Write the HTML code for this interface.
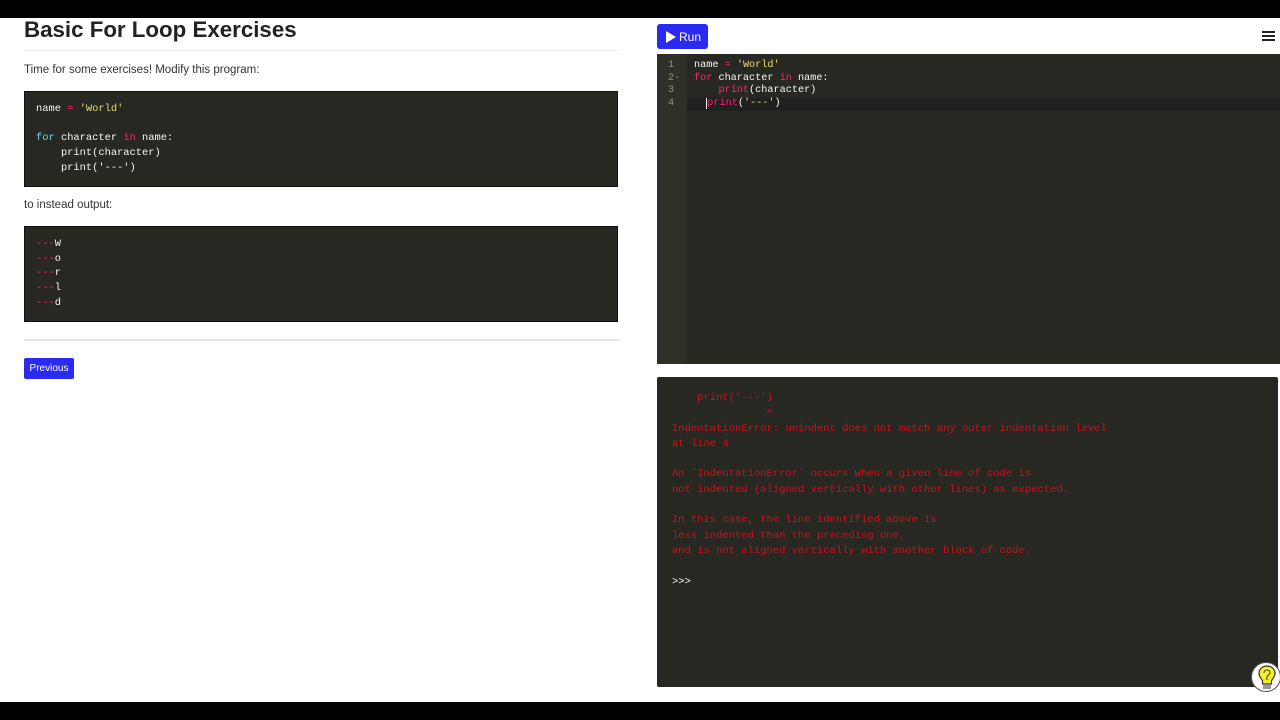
<!DOCTYPE html>
<html><head><style>
body{margin:0;width:1280px;height:720px;background:#fff;position:relative;overflow:hidden;font-family:"Liberation Sans",sans-serif}
.bar{position:absolute;left:0;width:1280px;background:#000}
.m{font-family:"Liberation Mono",monospace;white-space:pre}
.blk{position:absolute;left:24px;width:594px;background:#272822;color:#f8f8f2;font-size:10.4px;line-height:14.7px;padding:0 11px;box-sizing:border-box;border:1px solid #111}
.r{color:#f92672}.y{color:#e6db74}.c{color:#66d9ef}
.err{color:#d0101c}
</style></head><body>
<div class="bar" style="top:0;height:18px"></div>
<div class="bar" style="top:702px;height:18px"></div>

<div style="position:absolute;left:24px;top:17px;font-size:22.3px;font-weight:bold;color:#222">Basic For Loop Exercises</div>
<div style="position:absolute;left:24px;top:50px;width:596px;height:1px;background:#eee"></div>
<div style="position:absolute;left:24px;top:64px;font-size:11.5px;color:#333">Time for some exercises! Modify this program:</div>
<div class="blk m" style="top:91px;height:96px;padding-top:10px">name <span class="r">=</span> <span class="y">'World'</span>

<span class="c">for</span> character <span class="r">in</span> name:
    print(character)
    print('---')</div>
<div style="position:absolute;left:24px;top:199px;font-size:11.5px;color:#333">to instead output:</div>
<div class="blk m" style="top:226px;height:96px;padding-top:10px"><span class="r">---</span>W
<span class="r">---</span>o
<span class="r">---</span>r
<span class="r">---</span>l
<span class="r">---</span>d</div>
<div style="position:absolute;left:24px;top:339px;width:596px;height:2px;background:#e5e5e5"></div>
<div style="position:absolute;left:24px;top:358px;width:50px;height:21px;background:#2a2af0;border-radius:2px;color:#fff;font-size:10px;line-height:21px;text-align:center">Previous</div>

<div style="position:absolute;left:657px;top:24px;width:51px;height:25px;background:#2a2af0;border-radius:3px;color:#fff;font-size:12px;line-height:25px"><span style="position:absolute;left:9px;top:7px;width:0;height:0;border-left:10px solid #fff;border-top:6px solid transparent;border-bottom:6px solid transparent"></span><span style="position:absolute;left:22px;top:1px">Run</span></div>
<div style="position:absolute;left:1262px;top:31px;width:13px;height:2px;background:#222;box-shadow:0 4px 0 #222,0 8px 0 #222"></div>

<div style="position:absolute;left:657px;top:54px;width:623px;height:310px;background:#272822"></div>
<div style="position:absolute;left:657px;top:54px;width:30px;height:310px;background:#2f3129"></div>
<div style="position:absolute;left:687px;top:98px;width:593px;height:13px;background:#202020"></div>
<div class="m" style="position:absolute;left:668px;top:60px;font-size:10.2px;line-height:12.6px;color:#8f908a">1
2-
3
4</div>
<div class="m" style="position:absolute;left:694px;top:60px;font-size:10.2px;line-height:12.6px;color:#f8f8f2">name <span class="r">=</span> <span class="y">'World'</span>
<span class="r">for</span> character <span class="r">in</span> name:
    <span class="r">print</span>(character)
  <span style="border-left:1px solid #f8f8f2"></span><span class="r">print</span>(<span class="y">'---'</span>)</div>

<div style="position:absolute;left:657px;top:377px;width:621px;height:310px;background:#272822;border-radius:2px"></div>
<div class="m err" style="position:absolute;left:672px;top:391px;font-size:10.5px;line-height:15.3px">    print('---')
               ^
IndentationError: unindent does not match any outer indentation level
at line 4

An `IndentationError` occurs when a given line of code is
not indented (aligned vertically with other lines) as expected.

In this case, the line identified above is
less indented than the preceding one,
and is not aligned vertically with another block of code.

<span style="color:#fff">&gt;&gt;&gt;</span></div>
<div style="position:absolute;left:1251px;top:662px;width:30px;height:30px;border-radius:50%;background:#fff;border:1px solid #555;box-sizing:border-box"></div>
<svg style="position:absolute;left:1258px;top:665px" width="18" height="26" viewBox="0 0 18 26"><path d="M9 1C4 1 1 4.5 1 8.5c0 3 2 5 3.5 7V19h9v-3.5C15 13.5 17 11.5 17 8.5 17 4.5 14 1 9 1z" fill="#f5ee2a" stroke="#333" stroke-width="1.2"/><path d="M6 8c0-2 1.5-3 3-3s3 1 3 3-3 2-3 4v3" fill="none" stroke="#333" stroke-width="1"/><rect x="5" y="20" width="8" height="4" fill="#999"/></svg>
</body></html>
